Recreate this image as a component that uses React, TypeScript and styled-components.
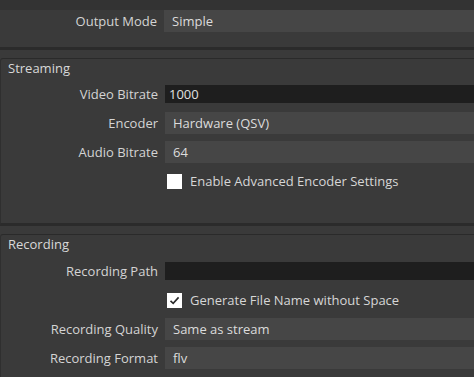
import React from "react";
import styled, { createGlobalStyle } from "styled-components";

const GlobalStyle = createGlobalStyle`
  html, body {
    margin: 0;
    padding: 0;
    background: #3a3a3a;
  }
  body {
    font-family: "Open Sans", "Noto Sans", "DejaVu Sans", sans-serif;
    font-size: 13px;
    color: #d6d6d6;
  }
`;

type Field =
  | { kind: "combo"; label: string; value: string }
  | { kind: "input"; label: string; value: string }
  | { kind: "check"; label: string; checked: boolean };

const streaming: Field[] = [
  { kind: "input", label: "Video Bitrate", value: "1000" },
  { kind: "combo", label: "Encoder", value: "Hardware (QSV)" },
  { kind: "combo", label: "Audio Bitrate", value: "64" },
  { kind: "check", label: "Enable Advanced Encoder Settings", checked: false },
];

const recording: Field[] = [
  { kind: "input", label: "Recording Path", value: "" },
  { kind: "check", label: "Generate File Name without Space", checked: true },
  { kind: "combo", label: "Recording Quality", value: "Same as stream" },
  { kind: "combo", label: "Recording Format", value: "flv" },
];

export default function App() {
  return (
    <>
      <GlobalStyle />
      <Page>
        <TopPanel>
          <Row>
            <Label>Output Mode</Label>
            <Combo>Simple</Combo>
          </Row>
        </TopPanel>
        <Group bottom={31}>
          <GroupTitle>Streaming</GroupTitle>
          <Form top={7}>{streaming.map(renderField)}</Form>
        </Group>
        <Group bottom={10}>
          <GroupTitle>Recording</GroupTitle>
          <Form top={8}>{recording.map(renderField)}</Form>
        </Group>
      </Page>
    </>
  );
}

function renderField(f: Field) {
  if (f.kind === "check") {
    return (
      <Row key={f.label}>
        <Label />
        <CheckWrap>
          <Box>
            {f.checked && (
              <svg width="13" height="13" viewBox="0 0 13 13">
                <path
                  d="M2.5 6.8 L5.2 9.4 L10.6 3.4"
                  fill="none"
                  stroke="#2b2b2b"
                  strokeWidth="1.6"
                />
              </svg>
            )}
          </Box>
          <CheckText>{f.label}</CheckText>
        </CheckWrap>
      </Row>
    );
  }
  return (
    <Row key={f.label}>
      <Label>{f.label}</Label>
      {f.kind === "combo" ? <Combo>{f.value}</Combo> : <Input>{f.value}</Input>}
    </Row>
  );
}

const Page = styled.div`
  width: 474px;
  height: 377px;
  overflow: hidden;
  background: #3a3a3a;
`;

const TopPanel = styled.div`
  height: 50px;
  padding-top: 10px;
  box-sizing: border-box;
  background: linear-gradient(#333 0, #333 10px, #3a3a3a 10px);
  border-bottom: 3px solid #2b2b2b;
  margin-bottom: 8px;
`;

const Group = styled.div<{ bottom: number }>`
  border-top: 1px solid #2a2a2a;
  border-left: 1px solid #2f2f2f;
  border-top-left-radius: 3px;
  border-bottom: 3px solid #2b2b2b;
  padding-bottom: ${(p) => p.bottom}px;
  margin-bottom: 8px;
`;

const GroupTitle = styled.div`
  height: 16px;
  line-height: 16px;
  padding: 1px 0 0 7px;
  color: #d8d8d8;
`;

const Form = styled.div<{ top: number }>`
  display: flex;
  flex-direction: column;
  gap: 7px;
  margin-top: ${(p) => p.top}px;
`;

const Row = styled.div`
  display: flex;
  align-items: center;
  height: 22px;
  gap: 7px;
`;

const Label = styled.div`
  width: 157px;
  flex-shrink: 0;
  text-align: right;
  white-space: nowrap;
  color: #d4d4d4;
`;

const Combo = styled.div`
  flex: 1;
  height: 22px;
  line-height: 22px;
  background: #464646;
  padding-left: 8px;
  color: #dcdcdc;
`;

const Input = styled.div`
  flex: 1;
  height: 18px;
  line-height: 18px;
  background: #1e1e1e;
  padding-left: 4px;
  color: #e0e0e0;
`;

const CheckWrap = styled.div`
  display: flex;
  align-items: center;
  gap: 8px;
  padding-left: 2px;
`;

const Box = styled.div`
  width: 15px;
  height: 15px;
  background: #ffffff;
  display: flex;
  align-items: center;
  justify-content: center;
`;

const CheckText = styled.div`
  color: #d6d6d6;
  white-space: nowrap;
`;
